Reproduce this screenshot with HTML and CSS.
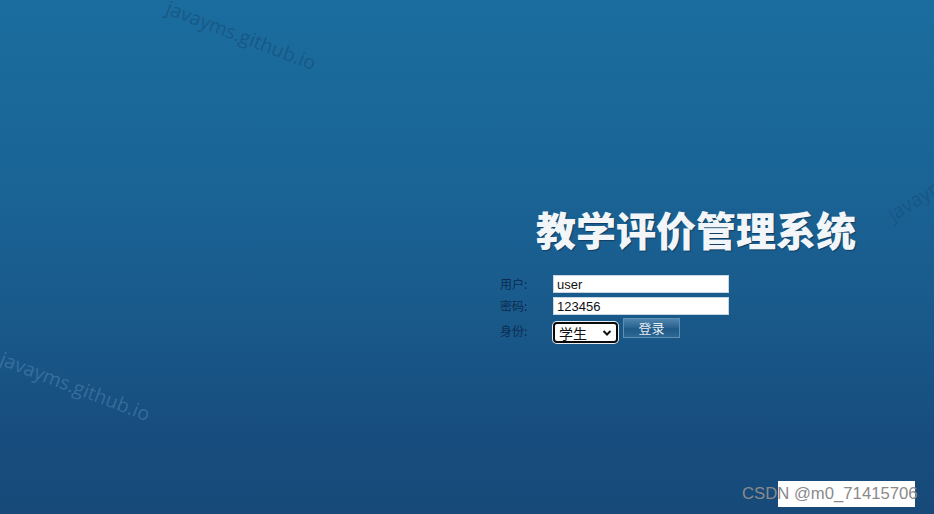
FILE: index.html
```html
<!DOCTYPE html>
<html lang="zh">
<head>
<meta charset="utf-8">
<title>教学评价管理系统</title>
<link rel="stylesheet" href="styles.css">
</head>
<body>
<div class="page">
  <div class="login">
    <h1 class="title">教学评价管理系统</h1>
    <form class="form">
      <label class="lbl" for="u">用户:</label>
      <input class="txt" id="u" type="text" value="user">
      <label class="lbl" for="p">密码:</label>
      <input class="txt" id="p" type="text" value="123456">
      <label class="lbl" for="r">身份:</label>
      <div class="actions">
        <div class="sel">学生<svg class="chev" viewBox="0 0 10 8" width="10" height="8"><path d="M1.5 2 L5 5.5 L8.5 2" fill="none" stroke="#111" stroke-width="2"/></svg></div>
        <button class="btn" type="button">登录</button>
      </div>
    </form>
  </div>
  <div class="wm wm-top">javayms.github.io</div>
  <div class="wm wm-left">javayms.github.io</div>
  <div class="wm wm-right">javayms.github.io</div>
  <div class="csdn"><span class="csdn-box"></span><span class="csdn-text">CSDN @m0_71415706</span></div>
</div>
</body>
</html>
```
FILE: styles.css
```css
html, body {
  margin: 0;
  padding: 0;
  height: 100%;
}
body {
  font-family: "Liberation Sans", "Noto Sans CJK SC", sans-serif;
  overflow: hidden;
}
.page {
  position: relative;
  height: 514px;
  background: linear-gradient(180deg, #1b6d9f 0%, #1a6496 35%, #195a8b 60%, #174d7e 85%, #174a79 100%);
  overflow: hidden;
}
.login {
  padding-top: 205px;
  padding-left: 500px;
}
.title {
  margin: 0 0 0 36px;
  font-family: "Noto Sans CJK SC", sans-serif;
  font-weight: 900;
  font-size: 40px;
  line-height: 48px;
  color: #f2f6f8;
  letter-spacing: 0;
  text-shadow: 1px 1px 1px rgba(10, 40, 70, 0.6);
}
.form {
  margin-top: 22px;
  display: grid;
  grid-template-columns: 53px 176px;
  row-gap: 4px;
  align-items: center;
}
.lbl {
  font-family: "Noto Sans CJK SC", sans-serif;
  font-size: 12px;
  color: #0b2c52;
  line-height: 16px;
}
.txt {
  box-sizing: border-box;
  width: 176px;
  height: 18px;
  margin: 0;
  padding: 0 3px;
  border: 1px solid #c8d6e2;
  background: #fff;
  font-family: "Liberation Sans", sans-serif;
  font-size: 13px;
  color: #111;
  outline: none;
}
.actions {
  display: flex;
  align-items: flex-end;
  gap: 5px;
  margin-top: 3px;
}
.sel {
  box-sizing: border-box;
  width: 65px;
  height: 21px;
  border: 2px solid #0a0a0a;
  border-radius: 4px;
  background: #fff;
  box-shadow: 0 0 0 1px #e8eef3;
  display: flex;
  align-items: center;
  justify-content: space-between;
  padding: 0 4px 0 4px;
  font-family: "Noto Sans CJK SC", sans-serif;
  font-size: 14px;
  color: #111;
  line-height: 1;
}
.chev {
  display: block;
}
.btn {
  box-sizing: border-box;
  width: 57px;
  height: 20px;
  margin: 0 0 1px 0;
  padding: 0;
  border: 1px solid #5f8fb3;
  background: linear-gradient(180deg, #4f85ad 0%, #2b6592 45%, #1f5886 55%, #2c6894 100%);
  color: #e6eef5;
  font-family: "Noto Sans CJK SC", sans-serif;
  font-size: 13px;
  line-height: 16px;
  align-self: flex-start;
  margin-top: -4px;
}
.wm {
  position: absolute;
  font-family: "Open Sans", "DejaVu Sans", sans-serif;
  font-size: 19.5px;
  white-space: nowrap;
  transform-origin: 0 0;
  transform: rotate(21deg);
}
.wm-top {
  left: 172px;
  top: -6px;
  color: rgba(20, 70, 110, 0.5);
}
.wm-left {
  left: 6px;
  top: 345px;
  color: rgba(120, 170, 210, 0.32);
}
.wm-right {
  left: 882px;
  top: 204px;
  transform: rotate(-32deg);
  color: rgba(20, 70, 110, 0.42);
}
.csdn {
  position: absolute;
  left: 742px;
  top: 481px;
  width: 190px;
  height: 26px;
}
.csdn-box {
  position: absolute;
  left: 36px;
  top: 0;
  width: 137px;
  height: 26px;
  background: #fff;
}
.csdn-text {
  position: absolute;
  left: 0;
  top: 4px;
  font-family: "Liberation Sans", sans-serif;
  font-size: 16.7px;
  line-height: 18px;
  color: #8a8a8a;
  white-space: nowrap;
}
```
